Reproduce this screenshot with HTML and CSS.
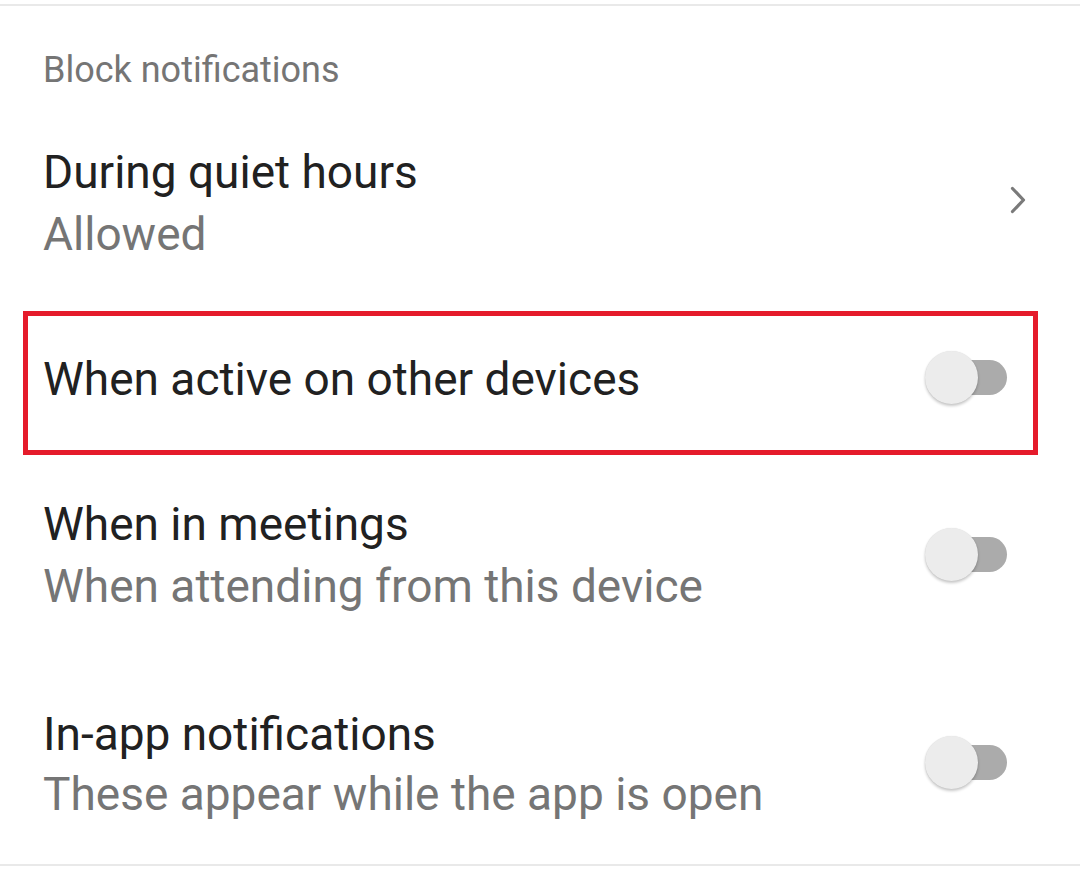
FILE: index.html
```html
<!DOCTYPE html>
<html lang="en">
<head>
<meta charset="utf-8">
<title>Block notifications</title>
<link rel="stylesheet" href="styles.css">
</head>
<body>
<div class="divider divider-top"></div>
<div class="section-header">Block notifications</div>

<div class="row row-quiet">
  <div class="texts">
    <div class="title">During quiet hours</div>
    <div class="subtitle">Allowed</div>
  </div>
  <svg class="chevron" width="16" height="28" viewBox="0 0 16 28">
    <polyline points="2.5,2.5 13.5,14 2.5,25.5" fill="none" stroke="#7a7a7a" stroke-width="3.2" stroke-linecap="round" stroke-linejoin="round"/>
  </svg>
</div>

<div class="row row-active highlighted">
  <div class="texts">
    <div class="title">When active on other devices</div>
  </div>
  <div class="switch"><span class="track"></span><span class="thumb"></span></div>
</div>

<div class="row row-meetings">
  <div class="texts">
    <div class="title">When in meetings</div>
    <div class="subtitle">When attending from this device</div>
  </div>
  <div class="switch"><span class="track"></span><span class="thumb"></span></div>
</div>

<div class="row row-inapp">
  <div class="texts">
    <div class="title">In-app notifications</div>
    <div class="subtitle subtitle-tight">These appear while the app is open</div>
  </div>
  <div class="switch"><span class="track"></span><span class="thumb"></span></div>
</div>
<div class="divider"></div>
</body>
</html>
```

FILE: styles.css
```css
html, body {
  margin: 0;
  padding: 0;
  background: #ffffff;
}

body {
  font-family: Roboto, "Noto Sans", "Liberation Sans", sans-serif;
  width: 1080px;
  height: 869px;
  overflow: hidden;
}

.divider {
  height: 2px;
  background: #e9e9e9;
}

.divider-top {
  margin-top: 4px;
}

.section-header {
  padding: 42px 0 0 43px;
  font-size: 36px;
  line-height: 44px;
  color: #757575;
}

.row {
  display: flex;
  align-items: center;
  padding-left: 43px;
  padding-right: 73px;
}

.texts {
  display: flex;
  flex-direction: column;
}

.title {
  font-size: 46px;
  line-height: 62px;
  color: #212121;
}

.subtitle {
  font-size: 46px;
  line-height: 62px;
  color: #757575;
}

.subtitle-tight {
  line-height: 58px;
}

.row-quiet {
  padding-top: 49px;
  padding-bottom: 46px;
  padding-right: 54px;
}

.chevron {
  margin-left: auto;
  margin-top: -6px;
}

.highlighted {
  border: 5px solid #e51b2b;
  margin-left: 23px;
  margin-right: 42px;
  padding-left: 15px;
  padding-right: 26px;
  padding-top: 32px;
  padding-bottom: 40px;
}

.row-active .switch {
  margin-top: -2px;
}

.row-meetings {
  padding-top: 38px;
  padding-bottom: 86px;
}

.row-inapp {
  padding-bottom: 41px;
}

.switch {
  position: relative;
  margin-left: auto;
  width: 82px;
  height: 54px;
  flex: none;
}

.track {
  position: absolute;
  left: 12px;
  top: 9px;
  width: 70px;
  height: 35px;
  border-radius: 18px;
  background: #ababab;
}

.thumb {
  position: absolute;
  left: 0;
  top: 0;
  width: 53px;
  height: 53px;
  border-radius: 50%;
  background: #ececec;
  box-shadow: 0 2px 3px rgba(0, 0, 0, 0.22), 0 0 1px rgba(0, 0, 0, 0.12);
}
```
